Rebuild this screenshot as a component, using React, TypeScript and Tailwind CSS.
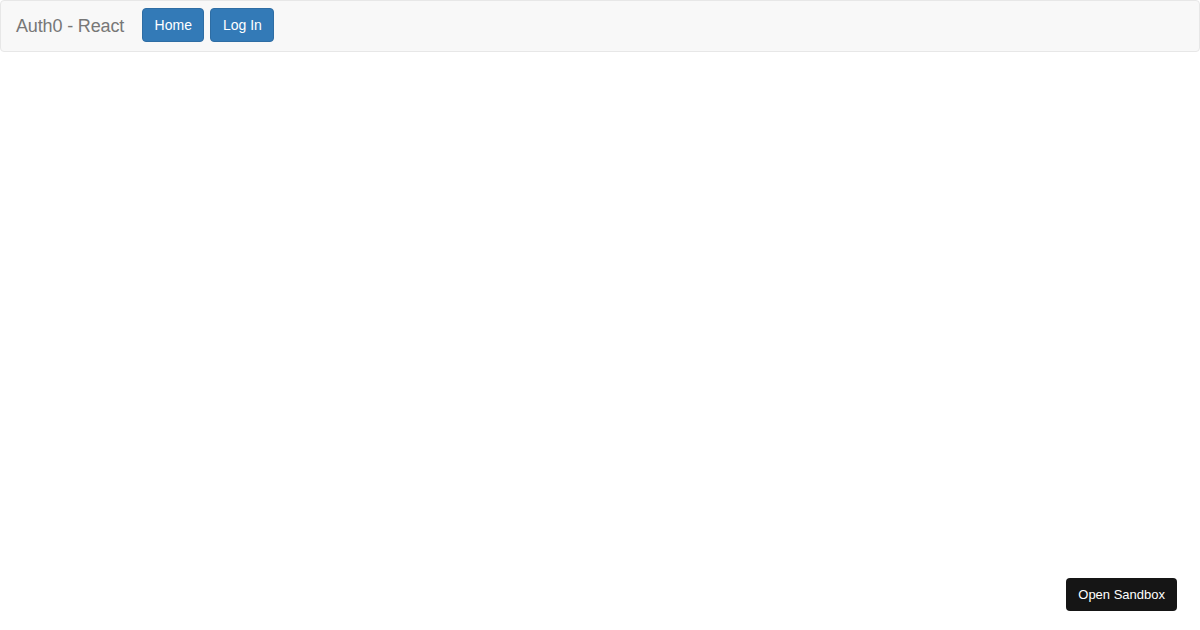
import React from 'react';

export default function App() {
  return (
    <div className="min-h-screen bg-white font-['Liberation_Sans',Arial,sans-serif] text-[14px] text-[#333]">
      <nav className="h-[52px] border border-[#e7e7e7] rounded bg-[#f8f8f8] flex items-start">
        <a className="pl-[15px] pt-[15px] text-[18px] text-[#777] leading-5 tracking-[-0.15px]">Auth0 - React</a>
        <div className="flex gap-[6px] ml-[18px] mt-[7px]">
          <button className="h-[34px] px-[11.5px] rounded bg-[#337ab7] border border-[#2e6da4] text-white text-[14px] leading-5">
            Home
          </button>
          <button className="h-[34px] px-[11.5px] rounded bg-[#337ab7] border border-[#2e6da4] text-white text-[14px] leading-5">
            Log In
          </button>
        </div>
      </nav>

      <button className="fixed right-[23px] bottom-[19px] h-[33px] px-[12px] rounded bg-[#151515] text-white text-[13px] leading-none">
        Open Sandbox
      </button>
    </div>
  );
}
